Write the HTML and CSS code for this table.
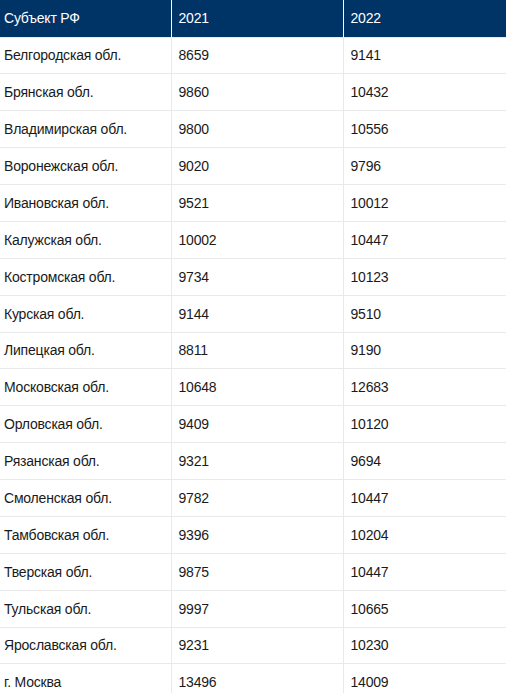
FILE: index.html
```html
<!DOCTYPE html>
<html lang="ru">
<head>
<meta charset="utf-8">
<link rel="stylesheet" href="styles.css">
</head>
<body>
<table class="data">
  <thead>
    <tr><th class="c1">Субъект РФ</th><th class="c2">2021</th><th class="c3">2022</th></tr>
  </thead>
  <tbody>
    <tr><td>Белгородская обл.</td><td>8659</td><td>9141</td></tr>
    <tr><td>Брянская обл.</td><td>9860</td><td>10432</td></tr>
    <tr><td>Владимирская обл.</td><td>9800</td><td>10556</td></tr>
    <tr><td>Воронежская обл.</td><td>9020</td><td>9796</td></tr>
    <tr><td>Ивановская обл.</td><td>9521</td><td>10012</td></tr>
    <tr><td>Калужская обл.</td><td>10002</td><td>10447</td></tr>
    <tr><td>Костромская обл.</td><td>9734</td><td>10123</td></tr>
    <tr><td>Курская обл.</td><td>9144</td><td>9510</td></tr>
    <tr><td>Липецкая обл.</td><td>8811</td><td>9190</td></tr>
    <tr><td>Московская обл.</td><td>10648</td><td>12683</td></tr>
    <tr><td>Орловская обл.</td><td>9409</td><td>10120</td></tr>
    <tr><td>Рязанская обл.</td><td>9321</td><td>9694</td></tr>
    <tr><td>Смоленская обл.</td><td>9782</td><td>10447</td></tr>
    <tr><td>Тамбовская обл.</td><td>9396</td><td>10204</td></tr>
    <tr><td>Тверская обл.</td><td>9875</td><td>10447</td></tr>
    <tr><td>Тульская обл.</td><td>9997</td><td>10665</td></tr>
    <tr><td>Ярославская обл.</td><td>9231</td><td>10230</td></tr>
    <tr><td>г. Москва</td><td>13496</td><td>14009</td></tr>
  </tbody>
</table>
</body>
</html>
```
FILE: styles.css
```css
html, body {
  margin: 0;
  padding: 0;
  background: #fff;
}
body {
  font-family: "Liberation Sans", Arial, sans-serif;
  font-size: 14px;
  letter-spacing: -0.2px;
  color: #1a1a1a;
}
.data {
  border-collapse: collapse;
  width: 506px;
  table-layout: fixed;
}
.data th {
  background: #003366;
  color: #fff;
  font-weight: normal;
  text-align: left;
  height: 37px;
  padding: 0 7px;
  box-sizing: border-box;
  border-left: 1px solid #fff;
  border-right: 1px solid #fff;
}
.data th.c1 { width: 171px; padding-left: 4px; border-left: none; }
.data th.c2 { width: 172px; }
.data th.c3 { border-right: none; }
.data td {
  height: 36.875px;
  box-sizing: border-box;
  padding: 0 7px;
  line-height: 20px;
  border: 1px solid #e9e9e9;
}
.data td:first-child { padding-left: 4px; border-left: none; }
.data td:last-child { border-right: none; }
```
